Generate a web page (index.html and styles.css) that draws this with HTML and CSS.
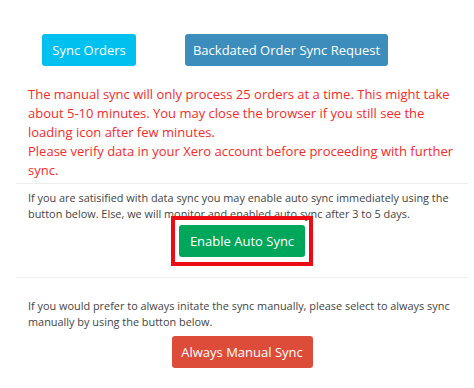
FILE: index.html
```html
<!DOCTYPE html>
<html lang="en">
<head>
    <meta charset="UTF-8">
    <meta name="viewport" content="width=device-width, initial-scale=1.0">
    <title>Sync</title>
<link rel="stylesheet" href="styles.css">
</head>
<body>
    <div class="box">
        <div class="actions">
            <button class="btn btn-aqua">Sync Orders</button>
            <button class="btn btn-blue">Backdated Order Sync Request</button>
        </div>
        <p class="warning">
            The manual sync will only process 25 orders at a time. This might take about 5-10 minutes. You may close the browser if you still see the loading icon after few minutes.<br>
            Please verify data in your Xero account before proceeding with further sync.
        </p>
        <div class="section">
            <p class="note">If you are satisified with data sync you may enable auto sync immediately using the button below. Else, we will monitor and enabled auto sync after 3 to 5 days.</p>
            <div class="center">
                <span class="marked">
                    <button class="btn btn-green">Enable Auto Sync</button>
                </span>
            </div>
        </div>
        <div class="section second">
            <p class="note">If you would prefer to always initate the sync manually, please select to always sync manually by using the button below.</p>
            <div class="center">
                <button class="btn btn-red">Always Manual Sync</button>
            </div>
        </div>
    </div>
</body>
</html>
```

FILE: styles.css
```css
body{
    margin: 0;
    background: #fff;
    font-family: "Open Sans", "Noto Sans", sans-serif;
    color: #444;
}
.box{
    margin: 0 6px 0 16px;
}
.actions{
    padding: 34px 0 0 26px;
    display: flex;
    gap: 49px;
}
.btn{
    border: 0;
    border-radius: 3px;
    height: 32px;
    padding: 0;
    color: #fff;
    font-family: inherit;
    font-size: 13px;
    white-space: nowrap;
    cursor: pointer;
}
.btn-aqua{ background: #00c0ef; width: 94px; }
.btn-blue{ background: #3c8dbc; width: 203px; }
.btn-green{ background: #00a65a; width: 126px; display: block; }
.btn-red{ background: #dd4b39; width: 141px; }
.marked{
    display: block;
    border: 4px solid #ee0a14;
    padding: 5px 4px;
    margin-top: -12px;
}
.warning{
    margin: 19px 0 0;
    padding: 0 12px;
    color: #f52a2a;
    font-size: 13px;
    line-height: 19px;
}
.section{
    border-top: 1px solid #eee;
    margin-top: 3px;
    padding: 6px 0 11px 12px;
}
.section.second{
    margin-top: 0;
    padding-top: 20px;
}
.note{
    margin: 0;
    padding-right: 4px;
    font-size: 10.9px;
    line-height: 16px;
}
.center{
    display: flex;
    justify-content: center;
    margin-top: 6px;
    padding-right: 12px;
}
```
